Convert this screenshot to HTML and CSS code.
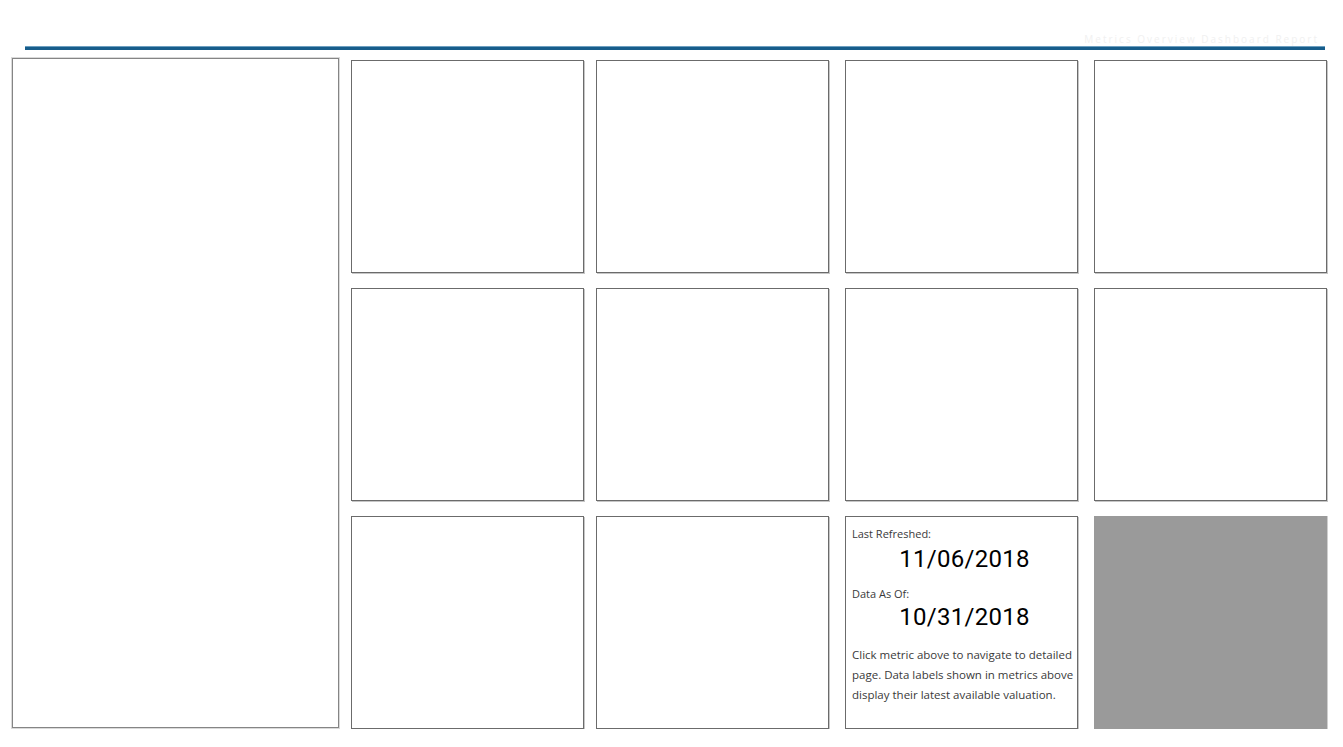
FILE: index.html
```html
<!DOCTYPE html>
<html lang="en">
<head>
<meta charset="utf-8">
<title>Metrics Dashboard</title>
<link rel="stylesheet" href="styles.css">
</head>
<body>
<header class="header">
  <div class="title-text">Metrics Overview Dashboard Report</div>
  <div class="rule"></div>
</header>
<main class="main">
  <section class="side-panel"></section>
  <section class="tiles">
    <div class="tile c1"></div>
    <div class="tile c2"></div>
    <div class="tile c3"></div>
    <div class="tile c4"></div>
    <div class="tile c1"></div>
    <div class="tile c2"></div>
    <div class="tile c3"></div>
    <div class="tile c4"></div>
    <div class="tile c1"></div>
    <div class="tile c2"></div>
    <div class="tile c3 info">
      <div class="label label-first">Last Refreshed:</div>
      <div class="date date-first">11/06/2018</div>
      <div class="label label-second">Data As Of:</div>
      <div class="date date-second">10/31/2018</div>
      <p class="note">Click metric above to navigate to detailed<br>page. Data labels shown in metrics above<br>display their latest available valuation.</p>
    </div>
    <div class="tile c4 filled"></div>
  </section>
</main>
</body>
</html>
```

FILE: styles.css
```css
html, body {
  margin: 0;
  padding: 0;
  background: #ffffff;
  font-family: "Open Sans", "Noto Sans", "Liberation Sans", sans-serif;
}

.header {
  height: 50px;
  display: flex;
  flex-direction: column;
  justify-content: flex-end;
}

.title-text {
  align-self: flex-end;
  margin-right: 24px;
  margin-bottom: 2px;
  font-size: 10px;
  line-height: 12px;
  letter-spacing: 2px;
  color: #f1f1f1;
  white-space: nowrap;
}

.rule {
  margin-left: 25px;
  width: 1300px;
  height: 3px;
  background: #175d8b;
  box-shadow: 0 -1px 0 #6d9fc0;
}

.main {
  display: flex;
  align-items: flex-start;
  padding-left: 12px;
  margin-top: 8px;
}

.side-panel {
  box-sizing: border-box;
  width: 327px;
  height: 670px;
  border: 1px solid #858585;
  box-shadow: 0 0 0 1px #dadada;
}

.tiles {
  margin-left: 12px;
  margin-top: 2px;
  display: grid;
  grid-template-columns: 233px 12px 233px 16px 233px 16px 233px;
  grid-auto-rows: 213px;
  row-gap: 15px;
}

.tile {
  box-sizing: border-box;
  border: 1px solid #6b6b6b;
  box-shadow: 1px 1px 0 #c6c6c6;
  background: #ffffff;
}

.c1 { grid-column: 1; }
.c2 { grid-column: 3; }
.c3 { grid-column: 5; }
.c4 { grid-column: 7; }

.filled {
  background: #9a9a9a;
  border-color: #9a9a9a;
  box-shadow: 1px 0 0 #cfcfcf;
}

.info {
  padding: 10px 4px 0 6px;
  color: #222222;
}

.label {
  font-size: 11px;
  line-height: 14px;
  color: #3a3a3a;
}

.date {
  font-family: Roboto, "Liberation Sans", sans-serif;
  font-size: 24px;
  line-height: 28px;
  font-weight: 400;
  letter-spacing: 0.3px;
  color: #000000;
  text-align: center;
  padding-left: 4px;
}

.date-first { margin-top: 4px; }
.label-second { margin-top: 14px; }
.date-second { margin-top: 2px; }

.note {
  margin: 14px 0 0 0;
  font-size: 11.5px;
  line-height: 20px;
  color: #3a3a3a;
  white-space: nowrap;
}
```
